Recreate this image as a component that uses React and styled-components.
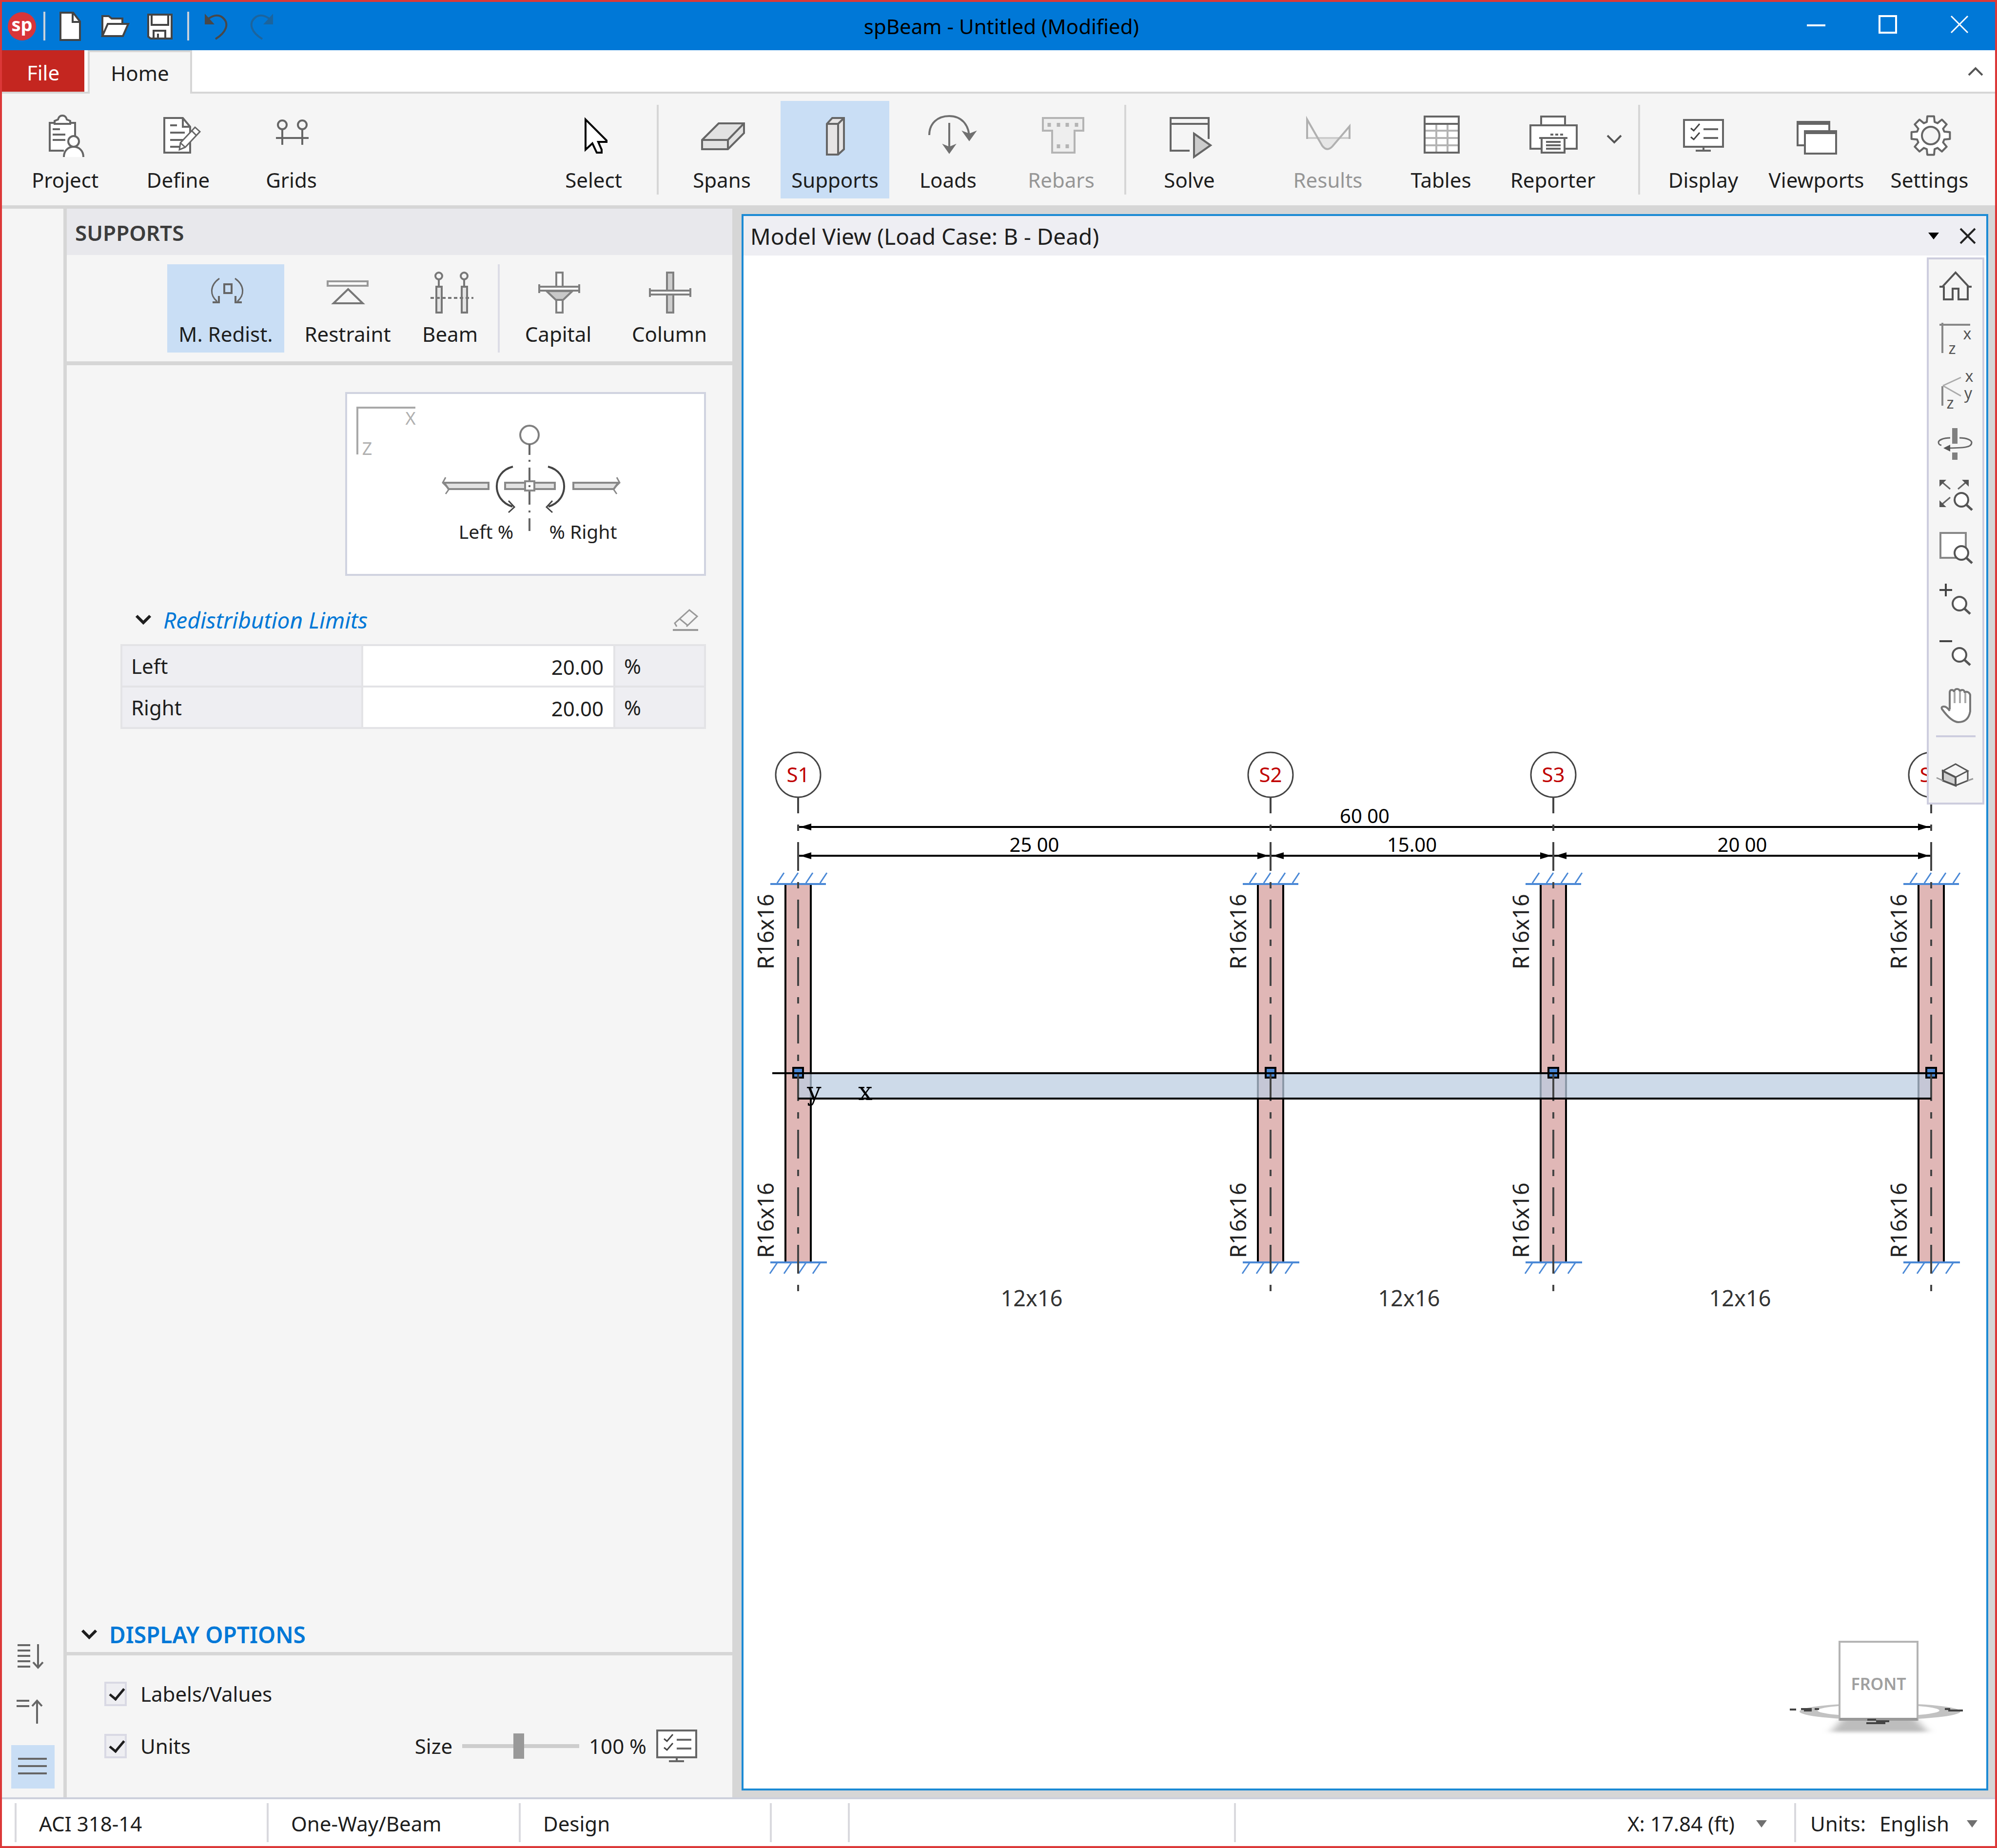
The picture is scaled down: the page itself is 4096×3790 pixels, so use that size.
import React, { useState } from "react";
import styled, { createGlobalStyle, css } from "styled-components";

const GlobalStyle = createGlobalStyle`
  * {
    box-sizing: border-box;
  }
  body {
    margin: 0;
    background-color: #f5f5f5;
  }
  body,
  button,
  input,
  select {
    font-family: "Noto Sans", "Open Sans", sans-serif;
    font-size: 42px;
    line-height: 56px;
    color: #1e1e1e;
  }
  button {
    margin: 0;
    padding: 0;
    border: 0;
    background: none;
  }
  svg {
    display: block;
    flex: none;
    overflow: visible;
  }
`;

const Window = styled.div`
  min-height: 100vh;
  display: flex;
  flex-direction: column;
  border: 4px solid #dc3838;
  background-color: #f5f5f5;
`;

/* ---------- title bar ---------- */

const TitleBar = styled.header`
  height: 99px;
  display: grid;
  grid-template-columns: 1fr auto 1fr;
  align-items: center;
  padding-left: 12px;
  background-color: #0078d7;
`;

const AppTitle = styled.h1`
  margin: 0;
  font-size: 42px;
  font-weight: 400;
  color: #000;
`;

const QuickAccess = styled.div`
  display: flex;
  align-items: center;
`;

const Logo = styled.span`
  width: 58px;
  height: 58px;
  margin-right: 10px;
  border-radius: 50%;
  background-color: #d8353a;
  color: #fff;
  font-size: 38px;
  font-weight: 700;
  line-height: 48px;
  text-align: center;
`;

const QuickDivider = styled.span`
  width: 4px;
  height: 59px;
  margin: 0 ${(props) => props.$gap}px;
  background-color: #c8d2dc;
`;

const QuickButton = styled.button`
  width: 92px;
  display: flex;
  justify-content: center;
  opacity: ${(props) => (props.disabled ? 0.4 : 1)};
`;

const WindowButtons = styled.div`
  display: flex;
  justify-content: flex-end;
`;

const WindowButton = styled.button`
  width: 147px;
  height: 99px;
  display: flex;
  align-items: center;
  justify-content: center;
`;

/* ---------- tabs and ribbon ---------- */

const Tabs = styled.nav`
  height: 89px;
  display: flex;
  align-items: stretch;
  background-color: #fff;
  border-bottom: 4px solid #d6d6d6;
`;

const FileTab = styled.button`
  width: 169px;
  margin-right: 7px;
  padding-top: 6px;
  background-color: #c42620;
  color: #fff;
`;

const Tab = styled.button`
  width: 214px;
  margin-bottom: -4px;
  border: 4px solid #d6d6d6;
  border-bottom: 0;
  background-color: #f5f5f5;
`;

const CollapseButton = styled.button`
  width: 80px;
  margin-left: auto;
  display: flex;
  align-items: center;
  justify-content: center;
`;

const Ribbon = styled.div`
  height: 229px;
  display: flex;
  align-items: center;
  padding: 0 23px 0 18px;
`;

const RibbonGroup = styled.div`
  display: flex;
  gap: 9px;
`;

const RibbonSpace = styled.div`
  flex: ${(props) => (props.$grow ? "1" : "0 0 61px")};
`;

const RibbonDivider = styled.div`
  width: 4px;
  height: 184px;
  margin: 0 18px;
  background-color: #d6d6d6;
`;

const ToolButton = styled.button`
  width: ${(props) => props.$width || 223}px;
  height: 200px;
  display: flex;
  flex-direction: column;
  align-items: center;
  padding-top: 14px;
  white-space: nowrap;
  ${(props) =>
    props.$active &&
    css`
      background-color: #c9def5;
    `}
  ${(props) =>
    props.disabled &&
    css`
      color: #969696;
    `}
`;

const MoreButton = styled.button`
  width: 42px;
  height: 200px;
  margin: 0 10px 0 -13px;
  display: flex;
  align-items: center;
  justify-content: center;
  padding-bottom: 42px;
`;

/* ---------- workspace ---------- */

const Workspace = styled.main`
  flex: 1;
  display: flex;
  border-top: 7px solid #d6d6d6;
  background-color: #d6d6d6;
`;

const Rail = styled.div`
  flex: 0 0 126px;
  display: flex;
  flex-direction: column;
  justify-content: flex-end;
  align-items: center;
  gap: 24px;
  padding-bottom: 18px;
  background-color: #f5f5f5;
`;

const RailButton = styled.button`
  width: 89px;
  height: 89px;
  background-color: ${(props) => (props.$active ? "#c9def5" : "transparent")};
`;

const Panel = styled.section`
  flex: 0 0 1365px;
  margin-left: 7px;
  display: flex;
  flex-direction: column;
  background-color: #f5f5f5;
`;

const PanelTitle = styled.h2`
  height: 95px;
  margin: 0;
  padding: 21px 17px;
  background-color: #e8e8ec;
  font-size: 44px;
  font-weight: 600;
  line-height: 56px;
  color: #3c3c3c;
`;

const PanelTools = styled.div`
  display: flex;
  justify-content: flex-end;
  gap: 18px;
  padding: 19px 21px 18px;
  border-bottom: 8px solid #d6d6d6;
`;

const PanelTool = styled(ToolButton)`
  height: 181px;
  padding-top: 8px;
  gap: 7px;
`;

const PanelDivider = styled.div`
  width: 4px;
  background-color: #dcdce6;
`;

const PanelBody = styled.div`
  flex: 1;
  padding: 55px 54px 0 110px;
`;

const Sketch = styled.figure`
  width: 740px;
  height: 377px;
  margin: 0 0 0 auto;
  border: 4px solid #d0d3e0;
  background-color: #fff;
`;

const SectionHeader = styled.div`
  height: 60px;
  margin: 60px 0 20px;
  padding: 0 16px 0 30px;
  display: flex;
  align-items: center;
  gap: 24px;
`;

const SectionTitle = styled.h3`
  flex: 1;
  margin: 0;
  font-size: 46px;
  font-weight: 400;
  font-style: italic;
  color: #0078d7;
`;

const LimitTable = styled.table`
  width: 100%;
  table-layout: fixed;
  border-collapse: collapse;
  th,
  td {
    height: 85px;
    padding: 0 18px;
    border: 4px solid #e3e3e6;
    background-color: #eeeef2;
    font-weight: 400;
    text-align: left;
  }
  th {
    width: 494px;
  }
  td:last-child {
    width: 186px;
  }
`;

const ValueCell = styled.td`
  && {
    padding: 0;
    background-color: #fff;
  }
`;

const ValueInput = styled.input`
  display: block;
  width: 100%;
  height: 81px;
  padding: 4px 20px 0;
  border: 0;
  background: none;
  text-align: right;
`;

const OptionsHeader = styled.div`
  height: 79px;
  padding-left: 29px;
  display: flex;
  align-items: center;
  gap: 24px;
  border-bottom: 7px solid #d6d6d6;
`;

const OptionsTitle = styled.h3`
  margin: 0;
  font-size: 46px;
  font-weight: 600;
  color: #0078d7;
`;

const Options = styled.div`
  display: flex;
  flex-direction: column;
  gap: 47px;
  padding: 49px 72px 75px 77px;
`;

const OptionRow = styled.div`
  height: 60px;
  display: flex;
  align-items: center;
  gap: 20px;
`;

const CheckLabel = styled.label`
  flex: 1;
  display: flex;
  align-items: center;
  gap: 28px;
`;

const CheckBox = styled.input`
  appearance: none;
  position: relative;
  width: 46px;
  height: 50px;
  margin: 0;
  border: 4px solid #d9d9e4;
  background-color: #eeeef2;
  &:checked::before {
    content: "";
    position: absolute;
    left: 13px;
    top: 3px;
    width: 13px;
    height: 25px;
    border: solid #1e1e1e;
    border-width: 0 5px 5px 0;
    transform: rotate(40deg);
  }
`;

const SizeSlider = styled.input`
  appearance: none;
  width: 240px;
  height: 52px;
  margin: 0;
  background: none;
  &::-webkit-slider-runnable-track {
    height: 8px;
    background-color: #cdcdcd;
  }
  &::-webkit-slider-thumb {
    appearance: none;
    width: 22px;
    height: 52px;
    margin-top: -22px;
    background-color: #999;
  }
`;

/* ---------- model view ---------- */

const View = styled.section`
  flex: 1;
  min-width: 0;
  margin: 11px 14px 14px 19px;
  display: flex;
  flex-direction: column;
  border: 4px solid #1c8ad4;
  background-color: #fff;
`;

const ViewHeader = styled.div`
  height: 81px;
  display: flex;
  align-items: center;
  padding: 0 18px 0 14px;
  background-color: #eeeef3;
`;

const ViewTitle = styled.h2`
  flex: 1;
  margin: 0;
  font-size: 46px;
  font-weight: 400;
`;

const ViewButton = styled.button`
  width: 40px;
  height: 60px;
  margin-left: 30px;
  display: flex;
  align-items: center;
  justify-content: center;
`;

const Canvas = styled.div`
  position: relative;
  flex: 1;
  min-height: 1200px;
`;

const Drawing = styled.svg`
  position: absolute;
  inset: 0;
  width: 100%;
  height: 100%;
`;

const ViewTools = styled.div`
  position: absolute;
  top: 4px;
  right: 4px;
  width: 118px;
  padding: 3px 0;
  display: flex;
  flex-direction: column;
  align-items: center;
  border: 4px solid #cdcdde;
  background-color: #f5f5f5;
`;

const ViewTool = styled.button`
  width: 107px;
  height: 107px;
  display: flex;
  align-items: center;
  justify-content: center;
`;

const ViewToolDivider = styled.div`
  width: 81px;
  height: 4px;
  margin: 10px 0 24px;
  background-color: #cdcdde;
`;

/* ---------- status bar ---------- */

const StatusBar = styled.footer`
  height: 100px;
  display: flex;
  align-items: center;
  padding-left: 26px;
  border-top: 4px solid #cdd0dc;
  background-color: #fff;
`;

const StatusCell = styled.div`
  flex: ${(props) => (props.$width ? `0 0 ${props.$width}px` : "1")};
  height: 80px;
  display: flex;
  align-items: center;
  padding: 4px 0 0 46px;
  border-left: 4px solid #d9d9de;
  white-space: nowrap;
`;

const StatusChoice = styled(StatusCell)`
  justify-content: flex-end;
  padding: 4px ${(props) => props.$right}px 0 0;
`;

const StatusLabel = styled.label`
  display: flex;
  align-items: center;
  gap: 28px;
`;

const StatusSelect = styled.select`
  appearance: none;
  margin: 0;
  padding: 0;
  border: 0;
  background: none;
`;

const DropMark = styled.span`
  margin-left: ${(props) => props.$gap}px;
  border: 11px solid transparent;
  border-top: 15px solid #707070;
  border-bottom: 0;
`;

/* ---------- icons ---------- */

const Glyph = ({ size = 120, height, color = "#666", children }) => (
  <svg
    width={size}
    height={height || size}
    viewBox={`0 0 ${size} ${height || size}`}
    fill="none"
    stroke={color}
    strokeWidth="4"
    aria-hidden="true"
  >
    {children}
  </svg>
);

const Chevron = ({ up, color = "#1e1e1e", width = 6 }) => (
  <svg width="34" height="24" viewBox="0 0 34 24" fill="none" stroke={color} strokeWidth={width}>
    <path d={up ? "M3 20L17 6L31 20" : "M3 4L17 18L31 4"} />
  </svg>
);

const gearPath = () => {
  const points = [];
  for (let i = 0; i < 8; i += 1) {
    [
      [-16, 29],
      [-10, 40],
      [10, 40],
      [16, 29]
    ].forEach(([deg, r]) => {
      const a = ((i * 45 + deg) * Math.PI) / 180;
      points.push(`${62 + r * Math.sin(a)},${57 - r * Math.cos(a)}`);
    });
  }
  return points.join(" ");
};

const ProjectIcon = () => (
  <Glyph>
    <path d="M80 64V31H28V88H57" fill="#fff" />
    <path d="M38 33V27L45 24Q47 16 54 16T63 24L70 27V33Z" fill="#fff" />
    <path d="M34 44H49M34 55H60M34 66H60" />
    <path d="M57 101C57 88 66 80 77 80S97 88 97 101" fill="#fff" />
    <circle cx="77" cy="69" r="11" fill="#fff" />
  </Glyph>
);

const DefineIcon = () => (
  <Glyph>
    <path d="M31 21H69L84 39V92H31Z" fill="#fff" />
    <path d="M69 21V39H84" />
    <path d="M43 36H57M43 51H73M43 66H69M43 80H70" />
    <path d="M62 86L64 72L94 40L104 49L74 81Z" fill="#fff" strokeWidth="3" />
    <path d="M64 72L74 81M87 47L97 57" strokeWidth="3" />
  </Glyph>
);

const GridsIcon = () => (
  <Glyph>
    <circle cx="41" cy="35" r="9" />
    <circle cx="82" cy="35" r="9" />
    <path d="M41 44V76M82 44V76M28 62H95" />
  </Glyph>
);

const SelectIcon = () => (
  <Glyph color="#000">
    <path d="M43 24V86L57 73L66 92H76V86L69 70H86V67Z" fill="#fff" />
  </Glyph>
);

const SpansIcon = () => (
  <Glyph>
    <path d="M19 66L53 32H105V52L72 85H19Z" fill="#e2e2e2" />
    <path d="M19 66H72V85M72 66L105 32" />
  </Glyph>
);

const SupportsIcon = () => (
  <Glyph>
    <path d="M43 33L54 21H78V85L66 96H43Z" fill="#e6e4e4" />
    <path d="M43 33H66V96M66 33L78 21" />
  </Glyph>
);

const LoadsIcon = () => (
  <Glyph color="#707070">
    <path d="M21 56C21 32 38 17 62 17S103 34 103 62M62 31V92" />
    <path d="M50 76L62 93L74 76L62 81ZM90 49L103 67L116 49L103 54Z" fill="#707070" strokeWidth="2" />
  </Glyph>
);

const RebarsIcon = () => (
  <Glyph color="#b4b4b4">
    <path d="M22 21H105V47H87V92H41V47H22Z" fill="#eee" />
    <path d="M35 31V39M54 31V39M72 31V39M91 31V39M54 75V83M72 75V83" strokeWidth="7" />
  </Glyph>
);

const SolveIcon = () => (
  <Glyph>
    <path d="M99 64V21H21V88H60" />
    <path d="M21 33H99" />
    <path d="M69 53L103 77L69 101Z" fill="#ccc" />
  </Glyph>
);

const ResultsIcon = () => (
  <Glyph color="#b0b0b0">
    <path d="M36 62L50 82Q59 88 68 82L84 62Z" fill="#e6e6e6" stroke="none" />
    <path d="M15 62H106" stroke="#ccc" />
    <path d="M17 64V24L48 78Q58 91 69 79L104 38V64" />
  </Glyph>
);

const TablesIcon = () => (
  <Glyph>
    <path d="M26 18H96V92H26Z" fill="#fff" />
    <path d="M50 35V90M73 35V90M28 47H94M28 62H94M28 77H94" stroke="#b4b4b4" />
    <path d="M26 18H96V92H26ZM26 33H96" />
  </Glyph>
);

const ReporterIcon = () => (
  <Glyph>
    <path d="M36 36V18H85V36" fill="#fff" />
    <path d="M36 84H14V36H109V84H85" fill="#fff" />
    <path d="M37 62V92H84V62" fill="#fff" />
    <path d="M32 62H90M46 70H76M46 77H76M46 84H76" />
    <path d="M55 55H84" strokeDasharray="6 4" />
  </Glyph>
);

const DisplayIcon = ({ size = 120, height = 120, box = "0 0 120 120" }) => (
  <svg width={size} height={height} viewBox={box} fill="none" stroke="#666" strokeWidth="4">
    <path d="M20 25H100V80H20Z" fill="#fff" />
    <path d="M60 80V88M44 88H75M60 44H90M60 62H90" />
    <path d="M34 42L40 47L52 33M34 60L40 65L52 51" strokeWidth="3" stroke="#444" />
  </svg>
);

const ViewportsIcon = () => (
  <Glyph>
    <path d="M21 31H86V77H21Z" fill="#fff" />
    <path d="M19 31H88" strokeWidth="8" />
    <path d="M36 50H100V94H36Z" fill="#fff" />
    <path d="M34 50H102" strokeWidth="8" />
  </Glyph>
);

const SettingsIcon = () => (
  <Glyph>
    <polygon points={gearPath()} fill="#fff" strokeLinejoin="round" />
    <circle cx="62" cy="57" r="18" fill="#f5f5f5" />
  </Glyph>
);

const RedistIcon = () => (
  <Glyph height={100}>
    <path d="M57 33H72V51H57Z" />
    <path d="M47 21C26 36 28 56 42 68M79 21C100 36 98 56 84 68" strokeWidth="3" />
    <path d="M33 70H46V57M93 70H80V57" />
  </Glyph>
);

const RestraintIcon = () => (
  <Glyph height={100} color="#777">
    <path d="M19 27H101V36H19Z" fill="#fff" stroke="#999" />
    <path d="M61 43L91 72H31Z" />
  </Glyph>
);

const BeamIcon = () => (
  <Glyph height={100} color="#777">
    <circle cx="37" cy="16" r="7" />
    <circle cx="89" cy="16" r="7" />
    <path d="M37 24V37M89 24V37" />
    <path d="M32 38H43V91H32ZM84 38H95V91H84Z" fill="#e4e4e4" />
    <path d="M20 61H108" strokeDasharray="7 5" />
  </Glyph>
);

const CapitalIcon = () => (
  <Glyph height={100} color="#808080">
    <path d="M56 9H69V91H56Z" fill="#fff" />
    <path d="M36 47H89L70 65H55Z" fill="#c8c8c8" />
    <path d="M21 38H103V46H21Z" fill="#fff" />
    <path d="M21 33V51M103 33V51" />
  </Glyph>
);

const ColumnIcon = () => (
  <Glyph height={100} color="#808080">
    <path d="M55 9H68V91H55Z" fill="#ccc" />
    <path d="M20 46H103V54H20Z" fill="#fff" />
    <path d="M20 41V59M103 41V59" />
  </Glyph>
);

const Magnifier = ({ x, y }) => (
  <g stroke="#555">
    <circle cx={x} cy={y} r="14" fill="#fff" />
    <path d={`M${x + 10} ${y + 10}L${x + 22} ${y + 21}`} strokeWidth="5" />
  </g>
);

const AxisText = styled.text`
  font-family: "Noto Sans", sans-serif;
  font-size: ${(props) => props.$size || 32}px;
  fill: ${(props) => props.$fill || "#555"};
  stroke: none;
  text-anchor: middle;
`;

const viewTools = [
  {
    name: "Home view",
    icon: <path d="M7 39H13L40 10L67 39H73M16 38V65H34V43H46V65H65V38" stroke="#555" />
  },
  {
    name: "XZ view",
    icon: (
      <>
        <path d="M7 10H70M13 6V68" stroke="#888" />
        <AxisText x="64" y="40">x</AxisText>
        <AxisText x="33" y="70">z</AxisText>
      </>
    )
  },
  {
    name: "Isometric view",
    icon: (
      <>
        <path d="M13 29V69" stroke="#888" />
        <path d="M14 28L51 11M14 28L51 49" stroke="#aaa" strokeWidth="3" />
        <AxisText x="68" y="20">x</AxisText>
        <AxisText x="66" y="55">y</AxisText>
        <AxisText x="29" y="75">z</AxisText>
      </>
    )
  },
  {
    name: "Rotate",
    icon: (
      <>
        <path d="M33 8H44V40H33ZM33 58H44V73H33Z" fill="#808080" stroke="none" />
        <path d="M29 28C14 28 5 33 5 37S8 43 11 43M48 28C64 28 73 33 73 38C73 47 60 49 18 49" strokeWidth="3" />
        <path d="M15 49L29 42V56Z" fill="#555" stroke="none" />
      </>
    )
  },
  {
    name: "Zoom to fit",
    icon: (
      <>
        <path d="M9 9L29 26M65 9L45 26M9 60L29 43" strokeWidth="3" />
        <path d="M7 7H21L7 21ZM67 7H53L67 21ZM7 63H21L7 49Z" fill="#555" stroke="none" />
        <Magnifier x={52} y={48} />
      </>
    )
  },
  {
    name: "Zoom window",
    icon: (
      <>
        <path d="M9 9H61V60H9Z" fill="#fff" stroke="#888" />
        <Magnifier x={52} y={50} />
      </>
    )
  },
  {
    name: "Zoom in",
    icon: (
      <>
        <path d="M7 19H33M20 6V32" stroke="#444" />
        <Magnifier x={48} y={47} />
      </>
    )
  },
  {
    name: "Zoom out",
    icon: (
      <>
        <path d="M7 17H33" stroke="#444" />
        <Magnifier x={48} y={45} />
      </>
    )
  },
  {
    name: "Pan",
    icon: (
      <>
        <path
          d="M28 50V16Q28 10 32 10T37 14Q38 8 43 8T49 13Q50 10 54 10T59 16Q60 13 64 14T70 20V54Q66 76 46 76C34 76 20 60 12 49Q10 44 16 44T28 53"
          fill="#fff"
          stroke="#777"
        />
        <path d="M38 14V37M49 13V37M60 16V37" stroke="#aaa" />
      </>
    )
  }
];

/* ---------- drawings ---------- */

const RedistSketch = () => (
  <svg width="100%" height="100%" viewBox="712 808 732 369" fill="none" strokeWidth="4">
    <path d="M733 932V836H852" stroke="#a8a8a8" />
    <AxisText x="842" y="871" $size={36} $fill="#b0b0b0">X</AxisText>
    <AxisText x="753" y="933" $size={36} $fill="#b0b0b0">Z</AxisText>
    <circle cx="1086" cy="892" r="19" stroke="#808080" />
    <path d="M1086 911V933M1086 943V947M1086 959V987M1086 1006V1035M1086 1047V1051M1086 1063V1089" stroke="#666" />
    <g stroke="#888">
      <path d="M1036 990H1138V1003H1036Z" fill="#e2e2e2" />
      <path d="M1077 987H1096V1006H1077Z" fill="#fff" />
      <path d="M911 990H1002V1003H920Z" fill="#e2e2e2" />
      <path d="M1268 990H1176V1003H1259Z" fill="#e2e2e2" />
      <path d="M914 979L908 990L921 1003L914 1013M1265 979L1271 990L1258 1003L1265 1013" strokeWidth="3" />
      <path d="M1086 995V999" stroke="#666" />
    </g>
    <g stroke="#444">
      <path d="M1052 957C1008 968 1008 1026 1051 1039M1124 957C1168 968 1168 1026 1125 1039" />
      <path d="M1043 1027L1055 1040L1043 1051M1133 1027L1121 1040L1133 1051" strokeWidth="3" />
    </g>
    <AxisText x="997" y="1105" $size={39} $fill="#222">Left %</AxisText>
    <AxisText x="1196" y="1105" $size={39} $fill="#222">% Right</AxisText>
  </svg>
);

const gridLines = [
  { name: "S1", x: 1637 },
  { name: "S2", x: 2606 },
  { name: "S3", x: 3186 },
  { name: "S4", x: 3961 }
];

const dimensions = [
  { from: 1637, to: 3961, y: 1696, text: "60 00" },
  { from: 1637, to: 2606, y: 1755, text: "25 00" },
  { from: 2606, to: 3186, y: 1755, text: "15.00" },
  { from: 3186, to: 3961, y: 1755, text: "20 00" }
];

const sections = [2116, 2890, 3569];

const Label = styled(AxisText)`
  font-size: ${(props) => props.$size || 45}px;
`;

const ColumnLabel = styled(Label)`
  text-anchor: start;
`;

const OriginLabel = styled(Label)`
  font-family: "DejaVu Serif", serif;
`;

const CubeLabel = styled(Label)`
  font-weight: 600;
`;

const Column = ({ x }) => (
  <g>
    <rect x={x - 26} y="1813" width="52" height="775" fill="#e0b7b6" />
    <path d={`M${x - 26} 1813V2588M${x + 26} 1813V2588`} stroke="#000" />
    <g stroke="#4a88d6">
      <path d={`M${x - 57} 1813H${x + 57}M${x - 57} 2589H${x + 59}`} />
      {[-43, -14, 16, 45].map((dx) => (
        <path
          key={dx}
          d={`M${x + dx} 1811L${x + dx + 14} 1790M${x + dx} 2590L${x + dx - 15} 2612`}
          strokeWidth="3"
        />
      ))}
    </g>
    {[1988, 2580].map((y) => (
      <ColumnLabel key={y} transform={`translate(${x - 50} ${y}) rotate(-90)`} $fill="#222">
        R16x16
      </ColumnLabel>
    ))}
  </g>
);

const Dimension = ({ from, to, y, text }) => (
  <g>
    <path d={`M${from} ${y}H${to}`} stroke="#000" />
    <path
      d={`M${from + 4} ${y}L${from + 27} ${y - 7}V${y + 7}ZM${to - 4} ${y}L${to - 27} ${y - 7}V${y + 7}Z`}
      fill="#000"
    />
    <Label x={(from + to) / 2} y={y - 8} $size={40} $fill="#000">
      {text}
    </Label>
  </g>
);

const ModelDrawing = () => (
  <Drawing viewBox="1525 524 2549 3144" fill="none" strokeWidth="4">
    {gridLines.map(({ name, x }) => (
      <Column key={name} x={x} />
    ))}
    <rect x="1637" y="2201" width="2324" height="52" fill="rgba(187, 205, 225, 0.74)" />
    {dimensions.map((item) => (
      <Dimension key={item.text} {...item} />
    ))}
    {gridLines.map(({ name, x }) => (
      <g key={name}>
        <circle cx={x} cy="1589" r="46" stroke="#444" strokeWidth="3" />
        <Label x={x} y="1604" $size={42} $fill="#c00000">
          {name}
        </Label>
        <rect x={x - 10} y="2190" width="20" height="20" fill="#4a88d6" stroke="#000" />
        <path d={`M${x} 1634V2650`} stroke="#444" strokeDasharray="59 23 13 23" strokeDashoffset="25" />
      </g>
    ))}
    <path d="M1584 2201H3987M1637 2253H3961" stroke="#000" />
    {sections.map((x) => (
      <Label key={x} x={x} y="2679" $fill="#333">
        12x16
      </Label>
    ))}
    <OriginLabel x="1670" y="2256" $size={52} $fill="#000">y</OriginLabel>
    <OriginLabel x="1775" y="2256" $size={52} $fill="#000">x</OriginLabel>

    {/* orientation cube with its compass ring */}
    <defs>
      <filter id="soft" x="-20%" y="-50%" width="140%" height="200%">
        <feGaussianBlur stdDeviation="9 3" />
      </filter>
    </defs>
    <path d="M3780 3524H3928L3955 3552H3755Z" fill="#bdbdbd" filter="url(#soft)" />
    <path d="M3691 3510A165 17 0 0 0 4021 3510A165 17 0 0 0 3691 3510ZM3728 3508A125 12 0 0 1 3978 3508A125 12 0 0 1 3728 3508Z" fill="#c2c2c2" fillRule="evenodd" />
    <rect x="3773" y="3367" width="160" height="160" fill="#fff" stroke="#b4b4b4" />
    <path d="M3773 3526H3933" stroke="#999" strokeWidth="6" />
    <path d="M3671 3506H3684M3694 3505H3716M3700 3508H3716M3722 3505H3731M3989 3505H4000M3996 3508H4026M3830 3527H3848M3848 3530H3875M3828 3534H3867" stroke="#444" />
    <CubeLabel x="3853" y="3466" $size={34} $fill="#a0a0a0">
      FRONT
    </CubeLabel>
  </Drawing>
);

const App = () => {
  const [limits, setLimits] = useState({ Left: "20.00", Right: "20.00" });
  const [size, setSize] = useState(48);

  return (
    <>
      <GlobalStyle />
      <Window>
        <TitleBar>
          <QuickAccess>
            <Logo>sp</Logo>
            <QuickDivider $gap={5} />
            <QuickButton aria-label="New">
              <Glyph size={60} color="#444">
                <path d="M10 2H36L50 20V58H10Z" fill="#fff" />
                <path d="M35 2V21H50" />
              </Glyph>
            </QuickButton>
            <QuickButton aria-label="Open">
              <Glyph size={60} color="#444">
                <path d="M4 50V9H17L23 14H45V24" fill="#fff" />
                <path d="M4 50L15 25H57L46 50Z" fill="#fff" />
              </Glyph>
            </QuickButton>
            <QuickButton aria-label="Save">
              <Glyph size={60} color="#444">
                <path d="M6 6H54V55H11L6 51Z" fill="#fff" />
                <path d="M13 6V27H47V6M17 55V39H41V55M26 55V45" />
              </Glyph>
            </QuickButton>
            <QuickDivider $gap={10} />
            <QuickButton aria-label="Undo">
              <Glyph size={60} color="#484848">
                <path d="M14 14Q28 4 40 10C60 24 48 44 28 56" />
                <path d="M6 4V26H26Z" fill="#484848" stroke="none" />
              </Glyph>
            </QuickButton>
            <QuickButton aria-label="Redo" disabled>
              <Glyph size={60} color="#484848">
                <path d="M46 14Q32 4 20 10C0 24 12 44 32 56" />
                <path d="M54 4V26H34Z" fill="#484848" stroke="none" />
              </Glyph>
            </QuickButton>
          </QuickAccess>
          <AppTitle>spBeam - Untitled (Modified)</AppTitle>
          <WindowButtons>
            <WindowButton aria-label="Minimize">
              <Glyph size={40} color="#fff">
                <path d="M1 18H39" />
              </Glyph>
            </WindowButton>
            <WindowButton aria-label="Maximize">
              <Glyph size={40} color="#fff">
                <path d="M3 -1H37V33H3Z" />
              </Glyph>
            </WindowButton>
            <WindowButton aria-label="Close">
              <Glyph size={40} color="#fff">
                <path d="M3 -1L37 33M37 -1L3 33" strokeWidth="3" />
              </Glyph>
            </WindowButton>
          </WindowButtons>
        </TitleBar>

        <Tabs>
          <FileTab>File</FileTab>
          <Tab>Home</Tab>
          <CollapseButton aria-label="Collapse ribbon">
            <Chevron up color="#555" width={4} />
          </CollapseButton>
        </Tabs>

        <Ribbon>
          <RibbonGroup>
            <ToolButton><ProjectIcon />Project</ToolButton>
            <ToolButton><DefineIcon />Define</ToolButton>
            <ToolButton><GridsIcon />Grids</ToolButton>
          </RibbonGroup>
          <RibbonSpace $grow />
          <ToolButton><SelectIcon />Select</ToolButton>
          <RibbonDivider />
          <RibbonGroup>
            <ToolButton><SpansIcon />Spans</ToolButton>
            <ToolButton $active><SupportsIcon />Supports</ToolButton>
            <ToolButton><LoadsIcon />Loads</ToolButton>
            <ToolButton disabled><RebarsIcon />Rebars</ToolButton>
          </RibbonGroup>
          <RibbonDivider />
          <ToolButton><SolveIcon />Solve</ToolButton>
          <RibbonSpace />
          <RibbonGroup>
            <ToolButton disabled><ResultsIcon />Results</ToolButton>
            <ToolButton><TablesIcon />Tables</ToolButton>
            <ToolButton $width={218}><ReporterIcon />Reporter</ToolButton>
            <MoreButton aria-label="Reporter options">
              <Chevron color="#555" width={4} />
            </MoreButton>
          </RibbonGroup>
          <RibbonDivider />
          <RibbonGroup>
            <ToolButton><DisplayIcon />Display</ToolButton>
            <ToolButton><ViewportsIcon />Viewports</ToolButton>
            <ToolButton><SettingsIcon />Settings</ToolButton>
          </RibbonGroup>
        </Ribbon>

        <Workspace>
          <Rail>
            <RailButton aria-label="Expand all">
              <Glyph size={89}>
                <path d="M13 21H39M13 32H39M13 43H39M13 54H39M13 65H39M55 19V67M45 56L55 67L65 56" />
              </Glyph>
            </RailButton>
            <RailButton aria-label="Collapse all">
              <Glyph size={89}>
                <path d="M11 22H37M11 33H37M53 69V22M43 33L53 22L63 33" />
              </Glyph>
            </RailButton>
            <RailButton $active aria-label="Panel menu">
              <Glyph size={89}>
                <path d="M14 28H73M14 43H73M14 58H73" />
              </Glyph>
            </RailButton>
          </Rail>

          <Panel>
            <PanelTitle>SUPPORTS</PanelTitle>
            <PanelTools>
              <PanelTool $width={240} $active><RedistIcon />M. Redist.</PanelTool>
              <PanelTool $width={224}><RestraintIcon />Restraint</PanelTool>
              <PanelTool $width={160}><BeamIcon />Beam</PanelTool>
              <PanelDivider />
              <PanelTool $width={204}><CapitalIcon />Capital</PanelTool>
              <PanelTool $width={216}><ColumnIcon />Column</PanelTool>
            </PanelTools>
            <PanelBody>
              <Sketch>
                <RedistSketch />
              </Sketch>
              <SectionHeader>
                <Chevron />
                <SectionTitle>Redistribution Limits</SectionTitle>
                <button aria-label="Clear limits">
                  <Glyph size={52} color="#999">
                    <path d="M8 40L4 33L34 6L50 19L28 40M14 24L31 38" strokeWidth="3" />
                    <path d="M0 47H52" />
                  </Glyph>
                </button>
              </SectionHeader>
              <LimitTable>
                <tbody>
                  {Object.keys(limits).map((side) => (
                    <tr key={side}>
                      <th scope="row">
                        <label htmlFor={side}>{side}</label>
                      </th>
                      <ValueCell>
                        <ValueInput
                          id={side}
                          value={limits[side]}
                          onChange={(e) => setLimits({ ...limits, [side]: e.target.value })}
                        />
                      </ValueCell>
                      <td>%</td>
                    </tr>
                  ))}
                </tbody>
              </LimitTable>
            </PanelBody>
            <OptionsHeader>
              <Chevron />
              <OptionsTitle>DISPLAY OPTIONS</OptionsTitle>
            </OptionsHeader>
            <Options>
              <OptionRow>
                <CheckLabel>
                  <CheckBox type="checkbox" defaultChecked />
                  Labels/Values
                </CheckLabel>
              </OptionRow>
              <OptionRow>
                <CheckLabel>
                  <CheckBox type="checkbox" defaultChecked />
                  Units
                </CheckLabel>
                <label htmlFor="size">Size</label>
                <SizeSlider
                  id="size"
                  type="range"
                  value={size}
                  onChange={(e) => setSize(e.target.value)}
                />
                <span>100 %</span>
                <button aria-label="Display settings">
                  <DisplayIcon size={84} height={68} box="18 23 84 68" />
                </button>
              </OptionRow>
            </Options>
          </Panel>

          <View>
            <ViewHeader>
              <ViewTitle>Model View (Load Case: B - Dead)</ViewTitle>
              <ViewButton aria-label="View menu">
                <Glyph size={24} color="none">
                  <path d="M1 5H23L12 19Z" fill="#000" />
                </Glyph>
              </ViewButton>
              <ViewButton aria-label="Close view">
                <Glyph size={36} color="#222">
                  <path d="M3 3L33 33M33 3L3 33" />
                </Glyph>
              </ViewButton>
            </ViewHeader>
            <Canvas>
              <ModelDrawing />
              <ViewTools>
                {viewTools.map(({ name, icon }) => (
                  <ViewTool key={name} aria-label={name}>
                    <Glyph size={80}>{icon}</Glyph>
                  </ViewTool>
                ))}
                <ViewToolDivider />
                <ViewTool aria-label="3D view">
                  <Glyph size={80} color="#555">
                    <path d="M14 31L40 44V61L14 51Z" fill="#d0d0d0" />
                    <path d="M14 31L40 17L65 31L40 44ZM65 31V51L40 61" strokeWidth="3" />
                    <path d="M1 45L14 51M65 51L76 47" stroke="#999" strokeWidth="3" />
                  </Glyph>
                </ViewTool>
              </ViewTools>
            </Canvas>
          </View>
        </Workspace>

        <StatusBar>
          <StatusCell $width={517}>ACI 318-14</StatusCell>
          <StatusCell $width={517}>One-Way/Beam</StatusCell>
          <StatusCell $width={515}>Design</StatusCell>
          <StatusCell $width={160} />
          <StatusCell $width={792} />
          <StatusChoice $right={56}>
            <StatusSelect aria-label="Cursor position">
              <option>X: 17.84 (ft)</option>
            </StatusSelect>
            <DropMark $gap={44} />
          </StatusChoice>
          <StatusChoice $width={412} $right={36}>
            <StatusLabel>
              Units:
              <StatusSelect>
                <option>English</option>
              </StatusSelect>
            </StatusLabel>
            <DropMark $gap={36} />
          </StatusChoice>
        </StatusBar>
      </Window>
    </>
  );
};

export default App;
